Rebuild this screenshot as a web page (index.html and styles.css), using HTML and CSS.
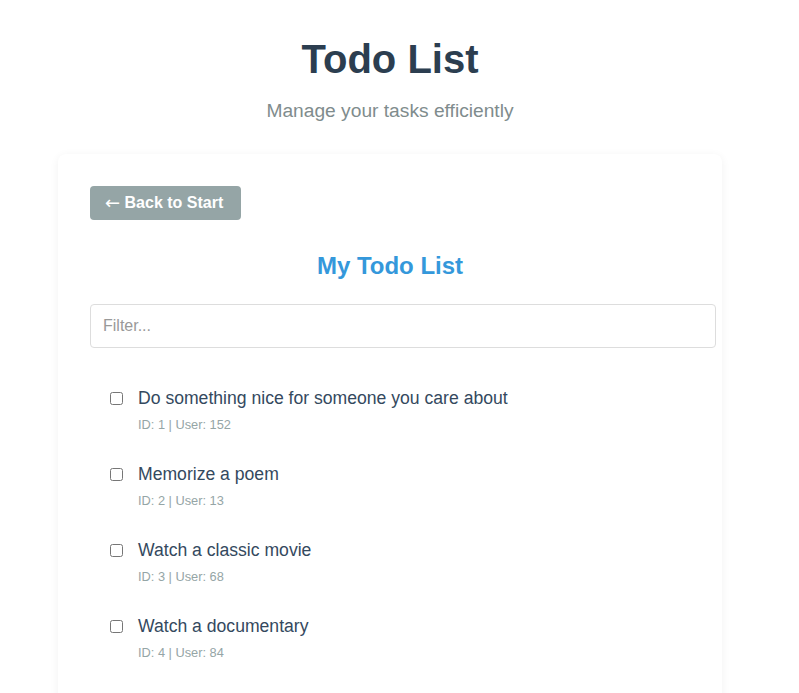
FILE: index.html
```html
<!DOCTYPE html>
<html lang="en">
<head>
<meta charset="utf-8">
<title>Todo List</title>
<link rel="stylesheet" href="styles.css">
</head>
<body>
<div class="page">
  <header class="header">
    <h1 class="title">Todo List</h1>
    <p class="subtitle">Manage your tasks efficiently</p>
  </header>
  <main class="card">
    <div class="actions">
      <button class="back-btn" type="button"><span class="arrow">←</span> Back to Start</button>
    </div>
    <h2 class="list-title">My Todo List</h2>
    <input class="filter" type="text" placeholder="Filter...">
    <ul class="todos">
      <li class="todo">
        <input class="check" type="checkbox">
        <div class="todo-body">
          <div class="todo-text">Do something nice for someone you care about</div>
          <div class="todo-meta">ID: 1 | User: 152</div>
        </div>
      </li>
      <li class="todo">
        <input class="check" type="checkbox">
        <div class="todo-body">
          <div class="todo-text">Memorize a poem</div>
          <div class="todo-meta">ID: 2 | User: 13</div>
        </div>
      </li>
      <li class="todo">
        <input class="check" type="checkbox">
        <div class="todo-body">
          <div class="todo-text">Watch a classic movie</div>
          <div class="todo-meta">ID: 3 | User: 68</div>
        </div>
      </li>
      <li class="todo">
        <input class="check" type="checkbox">
        <div class="todo-body">
          <div class="todo-text">Watch a documentary</div>
          <div class="todo-meta">ID: 4 | User: 84</div>
        </div>
      </li>
    </ul>
  </main>
</div>
</body>
</html>
```

FILE: styles.css
```css
html, body {
  margin: 0;
  padding: 0;
  background: #ffffff;
}

body {
  font-family: "Liberation Sans", Arial, sans-serif;
  color: #2c3e50;
}

.page {
  width: 780px;
  padding: 36px 0 40px;
}

.header {
  text-align: center;
  margin-bottom: 32px;
}

.title {
  margin: 0 0 18px;
  font-size: 40px;
  line-height: 46px;
  font-weight: 700;
  color: #2c3e50;
}

.subtitle {
  margin: 0;
  font-size: 19.2px;
  line-height: 22px;
  color: #7f8c8d;
}

.card {
  display: block;
  max-width: 600px;
  margin: 0 auto;
  padding: 32px;
  background: #ffffff;
  border-radius: 8px;
  box-shadow: 0 2px 10px rgba(0, 0, 0, 0.06);
}

.actions {
  display: flex;
}

.back-btn {
  display: block;
  height: 34px;
  box-sizing: border-box;
  font-family: "Liberation Sans", Arial, sans-serif;
  font-size: 16px;
  font-weight: 700;
  line-height: 18px;
  color: #ffffff;
  background: #95a5a6;
  border: none;
  border-radius: 4px;
  padding: 8px 18px 8px 15px;
  cursor: pointer;
}

.arrow {
  font-family: "DejaVu Sans", sans-serif;
  font-weight: 400;
  font-size: 18px;
  line-height: 18px;
  vertical-align: top;
}

.list-title {
  margin: 32px 0 24px;
  text-align: center;
  font-size: 24px;
  line-height: 28px;
  font-weight: 700;
  color: #3498db;
}

.filter {
  display: block;
  width: 100%;
  box-sizing: content-box;
  margin: 0;
  padding: 12px;
  font-family: "Liberation Sans", Arial, sans-serif;
  font-size: 16px;
  line-height: 18px;
  height: 18px;
  color: #2c3e50;
  border: 1px solid #dddddd;
  border-radius: 4px;
  outline: none;
}

.filter::placeholder {
  color: #999999;
}

.todos {
  list-style: none;
  margin: 24px 0 0;
  padding: 0;
}

.todo {
  display: flex;
  align-items: flex-start;
  gap: 15px;
  padding: 16px 0 16px 20px;
}

.check {
  width: 13px;
  height: 13px;
  margin: 4px 0 0;
  flex: none;
}

.todo-body {
  display: flex;
  flex-direction: column;
  gap: 9px;
}

.todo-text {
  font-size: 17.6px;
  line-height: 21px;
  color: #34495e;
}

.todo-meta {
  font-size: 12.8px;
  line-height: 14px;
  color: #95a5a6;
}
```
